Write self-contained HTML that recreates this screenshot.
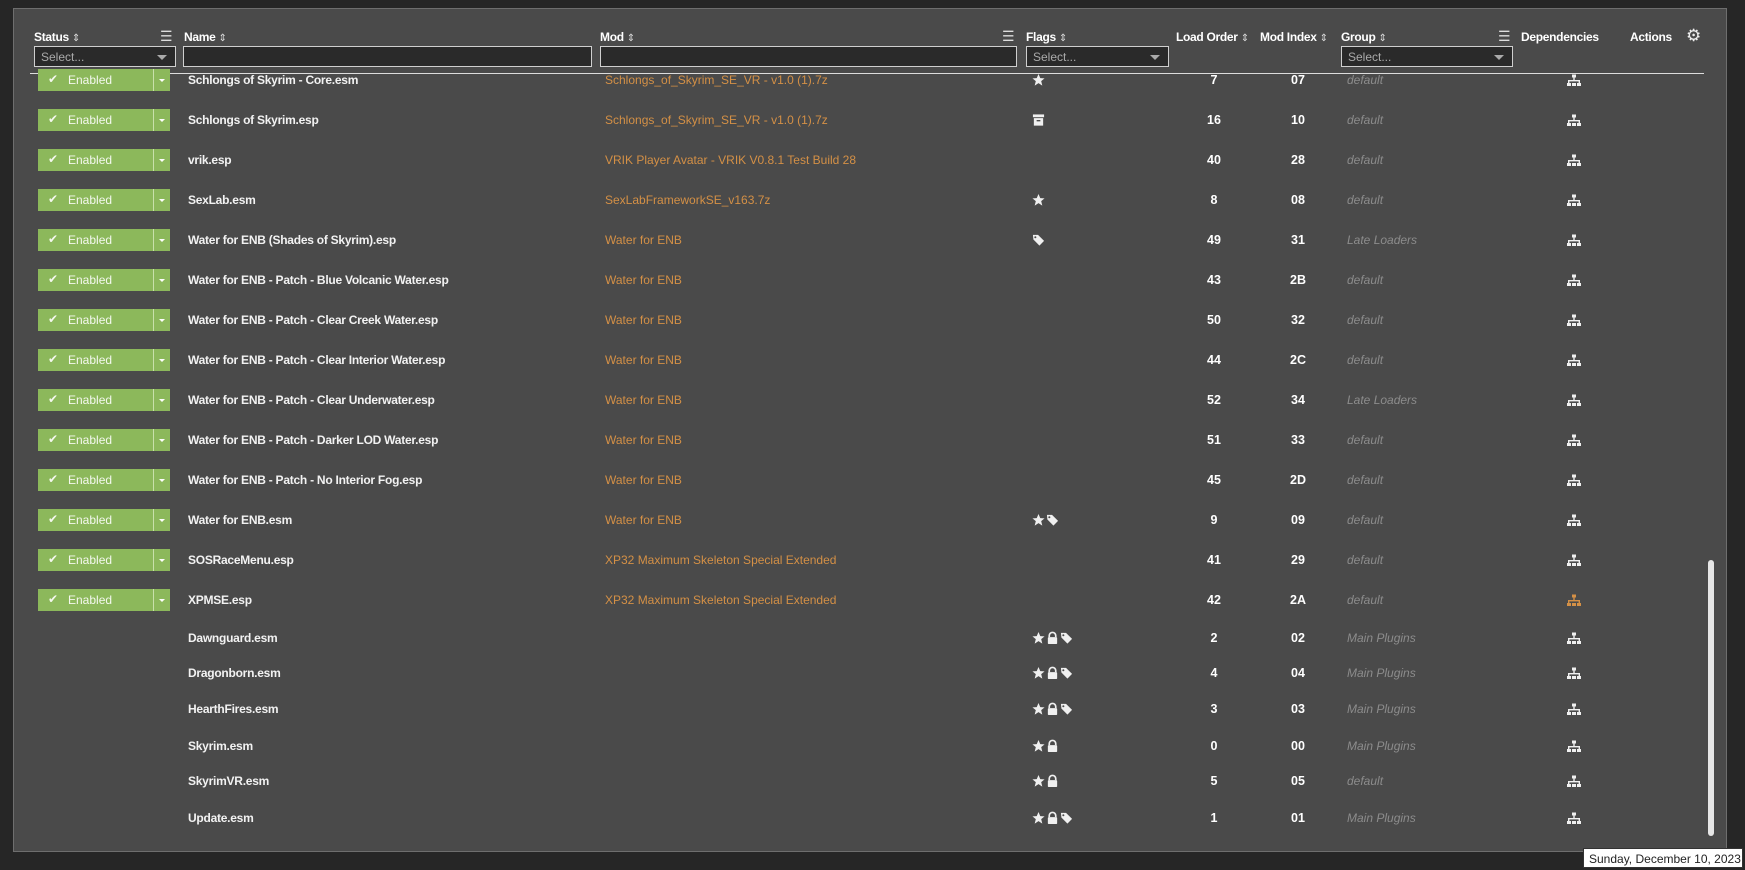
<!DOCTYPE html>
<html><head><meta charset="utf-8"><style>
*{box-sizing:border-box;margin:0;padding:0}
body{width:1745px;height:870px;background:#262626;font-family:"Liberation Sans",sans-serif;position:relative;overflow:hidden;color:#fff}
.panel{position:absolute;left:13px;top:8px;width:1714px;height:844px;background:#4a4a4a;border:1px solid #6e6e6e}
.a{position:absolute;white-space:nowrap}
.h{font-size:12px;font-weight:bold;top:30px;letter-spacing:-0.3px}
.h .s{font-weight:normal;font-size:10px;color:#ddd}
.inp{position:absolute;top:46px;height:21px;background:#2a2a2a;border:1px solid #cfcfcf;font-size:12px;color:#aaa;padding:3px 6px}
.inp .c{position:absolute;right:8px;top:8px;border-left:5px solid transparent;border-right:5px solid transparent;border-top:5px solid #aaa}
.line{position:absolute;left:30px;top:73px;width:1674px;height:1px;background:#ddd}
.btn{position:absolute;left:38px;width:132px;height:22px;background:#8cb85b;font-size:12px;color:#f4f8ee}
.btn .t{position:absolute;left:30px;top:4px}
.btn .k{position:absolute;left:10px;top:3px;font-size:12px}
.btn .d{position:absolute;left:115px;top:0;width:1px;height:22px;background:#c9e0ab}
.btn .ar{position:absolute;left:121px;top:10px;border-left:3px solid transparent;border-right:3px solid transparent;border-top:3px solid #fff}
.nm{position:absolute;left:188px;font-size:12px;font-weight:bold;letter-spacing:-0.25px;color:#f2f2f2}
.md{position:absolute;left:605px;font-size:12px;color:#d49046}
.lo{position:absolute;left:1194px;width:40px;text-align:center;font-size:12.5px;font-weight:bold}
.mi{position:absolute;left:1278px;width:40px;text-align:center;font-size:12.5px;font-weight:bold}
.gr{position:absolute;left:1347px;font-size:12px;font-style:italic;color:#8c8c8c}
.fl{position:absolute;left:1032px;height:14px}
.fl svg{display:inline-block;vertical-align:top;margin-right:1px}
.dep{position:absolute;left:1567px;width:14px;height:13px}
</style></head><body>
<div class="panel"></div>
<div class="a h" style="left:34px">Status <span class="s">⇕</span></div>
<div class="a" style="left:160px;top:28px;font-size:14px;color:#ddd">☰</div>
<div class="a h" style="left:184px">Name <span class="s">⇕</span></div>
<div class="a h" style="left:600px">Mod <span class="s">⇕</span></div>
<div class="a" style="left:1002px;top:28px;font-size:14px;color:#ddd">☰</div>
<div class="a h" style="left:1026px">Flags <span class="s">⇕</span></div>
<div class="a h" style="left:1176px">Load Order <span class="s">⇕</span></div>
<div class="a h" style="left:1260px">Mod Index <span class="s">⇕</span></div>
<div class="a h" style="left:1341px">Group <span class="s">⇕</span></div>
<div class="a" style="left:1498px;top:28px;font-size:14px;color:#ddd">☰</div>
<div class="a h" style="left:1521px">Dependencies</div>
<div class="a h" style="left:1630px">Actions</div>
<div class="a" style="left:1686px;top:26px;font-size:17px;color:#eee">⚙</div>
<div class="inp" style="left:34px;width:142px">Select...<span class="c"></span></div>
<div class="inp" style="left:183px;width:409px"></div>
<div class="inp" style="left:600px;width:417px"></div>
<div class="inp" style="left:1026px;width:143px">Select...<span class="c"></span></div>
<div class="inp" style="left:1341px;width:172px">Select...<span class="c"></span></div>
<div class="line"></div>
<div class="a" style="left:1708px;top:560px;width:6px;height:276px;background:#e6e6e6;border-radius:3px"></div>
<div class="a" style="left:1583px;top:848px;width:160px;height:20px;background:#fff;border:1px solid #333;color:#222;font-size:12px;padding:3px 5px">Sunday, December 10, 2023</div>
<svg width="0" height="0" style="position:absolute"><defs>
<g id="dp"><rect x="5" y="0" width="4" height="3"/><rect x="6.3" y="3" width="1.4" height="3"/><rect x="1" y="5.5" width="12" height="1.4"/><rect x="1" y="5.5" width="1.4" height="3"/><rect x="11.6" y="5.5" width="1.4" height="3"/><rect x="0" y="8.5" width="4" height="3"/><rect x="5" y="8.5" width="4" height="3"/><rect x="10" y="8.5" width="4" height="3"/></g>
<polygon id="st" points="7,0.5 8.9,5 13.5,5.2 9.9,8.2 11.1,13 7,10.4 2.9,13 4.1,8.2 0.5,5.2 5.1,5"/>
<g id="lk"><path d="M3.5 6V4.5a3.5 3.5 0 0 1 7 0V6" fill="none" stroke="#f0f0f0" stroke-width="1.8"/><rect x="2" y="6" width="10" height="7.5" rx="1"/></g>
<g id="tg"><path d="M1 1.5h5.5l6.5 6.5-5 5-6.5-6.5z"/><circle cx="3.6" cy="4" r="1.1" fill="#4a4a4a"/></g>
<g id="ar"><rect x="1" y="1" width="12" height="3"/><path d="M2 5h10v8H2z M5 7v1.5h4V7z" fill-rule="evenodd"/></g>
</defs></svg>
<div id="rows"></div>
<script>
var R=[
["Schlongs of Skyrim - Core.esm","Schlongs_of_Skyrim_SE_VR - v1.0 (1).7z","s","7","07","default",1],
["Schlongs of Skyrim.esp","Schlongs_of_Skyrim_SE_VR - v1.0 (1).7z","a","16","10","default",1],
["vrik.esp","VRIK Player Avatar - VRIK V0.8.1 Test Build 28","","40","28","default",1],
["SexLab.esm","SexLabFrameworkSE_v163.7z","s","8","08","default",1],
["Water for ENB (Shades of Skyrim).esp","Water for ENB","t","49","31","Late Loaders",1],
["Water for ENB - Patch - Blue Volcanic Water.esp","Water for ENB","","43","2B","default",1],
["Water for ENB - Patch - Clear Creek Water.esp","Water for ENB","","50","32","default",1],
["Water for ENB - Patch - Clear Interior Water.esp","Water for ENB","","44","2C","default",1],
["Water for ENB - Patch - Clear Underwater.esp","Water for ENB","","52","34","Late Loaders",1],
["Water for ENB - Patch - Darker LOD Water.esp","Water for ENB","","51","33","default",1],
["Water for ENB - Patch - No Interior Fog.esp","Water for ENB","","45","2D","default",1],
["Water for ENB.esm","Water for ENB","st","9","09","default",1],
["SOSRaceMenu.esp","XP32 Maximum Skeleton Special Extended","","41","29","default",1],
["XPMSE.esp","XP32 Maximum Skeleton Special Extended","","42","2A","default",1],
["Dawnguard.esm","","slt","2","02","Main Plugins",0],
["Dragonborn.esm","","slt","4","04","Main Plugins",0],
["HearthFires.esm","","slt","3","03","Main Plugins",0],
["Skyrim.esm","","sl","0","00","Main Plugins",0],
["SkyrimVR.esm","","sl","5","05","default",0],
["Update.esm","","slt","1","01","Main Plugins",0]];
var M={s:"st",l:"lk",t:"tg",a:"ar"};
var h="";
var ys=[80,120,160,200,240,280,320,360,400,440,480,520,560,600,638,673,709,746,781,818];
R.forEach(function(r,i){var y=ys[i],ty=y-7;
if(r[6])h+='<div class="btn" style="top:'+(y-11)+'px"><span class="k">✔</span><span class="t">Enabled</span><span class="d"></span><span class="ar"></span></div>';
h+='<div class="nm" style="top:'+ty+'px">'+r[0]+'</div>';
if(r[1])h+='<div class="md" style="top:'+ty+'px">'+r[1]+'</div>';
if(r[2]){h+='<div class="fl" style="top:'+(y-7)+'px">';for(var c of r[2])h+='<svg width="13" height="14" viewBox="0 0 14 14" fill="#f0f0f0"><use href="#'+M[c]+'"/></svg>';h+='</div>';}
h+='<div class="lo" style="top:'+ty+'px">'+r[3]+'</div><div class="mi" style="top:'+ty+'px">'+r[4]+'</div><div class="gr" style="top:'+ty+'px">'+r[5]+'</div>';
h+='<svg class="dep" style="top:'+(y-6)+'px" viewBox="0 0 14 12" fill="'+(i==13?'#d49046':'#f0f0f0')+'"><use href="#dp"/></svg>';
});
document.getElementById("rows").innerHTML=h;
</script>
</body></html>
